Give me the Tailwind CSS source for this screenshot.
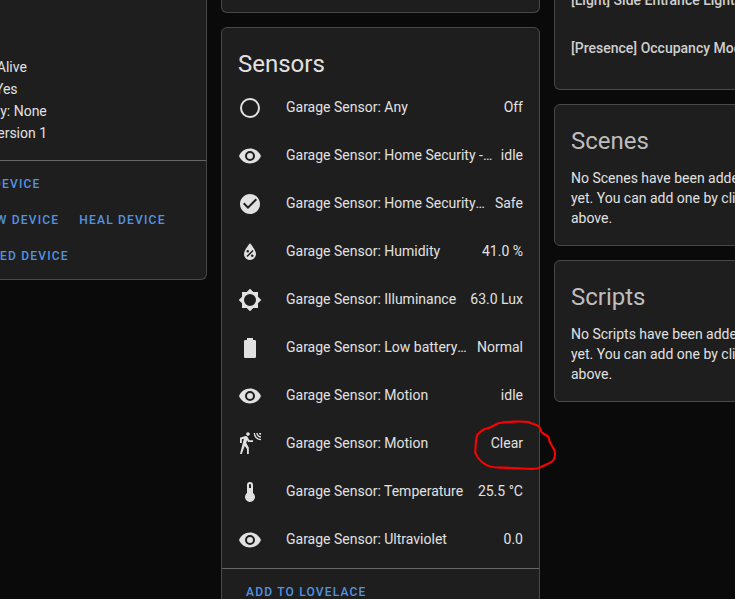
<!DOCTYPE html>
<html lang="en">
<head>
<meta charset="utf-8">
<meta name="viewport" content="width=device-width, initial-scale=1">
<title>Garage Sensor</title>
<script src="https://cdn.jsdelivr.net/npm/@tailwindcss/browser@4"></script>
</head>
<body class="bg-[#0a0a0a] font-[Roboto,sans-serif] text-sm leading-5 text-[#e1e1e1]">
<svg class="hidden" aria-hidden="true">
  <symbol id="radio" viewBox="0 0 24 24"><path d="M12,20A8,8 0 0,1 4,12A8,8 0 0,1 12,4A8,8 0 0,1 20,12A8,8 0 0,1 12,20M12,2A10,10 0 0,0 2,12A10,10 0 0,0 12,22A10,10 0 0,0 22,12A10,10 0 0,0 12,2Z"/></symbol>
  <symbol id="eye" viewBox="0 0 24 24"><path d="M12,9A3,3 0 0,0 9,12A3,3 0 0,0 12,15A3,3 0 0,0 15,12A3,3 0 0,0 12,9M12,17A5,5 0 0,1 7,12A5,5 0 0,1 12,7A5,5 0 0,1 17,12A5,5 0 0,1 12,17M12,4.5C7,4.5 2.73,7.61 1,12C2.73,16.39 7,19.5 12,19.5C17,19.5 21.27,16.39 23,12C21.27,7.61 17,4.5 12,4.5Z"/></symbol>
  <symbol id="check" viewBox="0 0 24 24"><path d="M12 2C6.5 2 2 6.5 2 12S6.5 22 12 22 22 17.5 22 12 17.5 2 12 2M10 17L5 12L6.41 10.59L10 14.17L17.59 6.58L19 8L10 17Z"/></symbol>
  <symbol id="humidity" viewBox="0 0 24 24"><path d="M12,3.25C12,3.25 6,10 6,14C6,17.32 8.69,20 12,20A6,6 0 0,0 18,14C18,10 12,3.25 12,3.25M14.47,9.97L15.53,11.03L9.53,17.03L8.47,15.97M9.75,10A1.25,1.25 0 0,1 11,11.25A1.25,1.25 0 0,1 9.75,12.5A1.25,1.25 0 0,1 8.5,11.25A1.25,1.25 0 0,1 9.75,10M14.25,14.5A1.25,1.25 0 0,1 15.5,15.75A1.25,1.25 0 0,1 14.25,17A1.25,1.25 0 0,1 13,15.75A1.25,1.25 0 0,1 14.25,14.5Z"/></symbol>
  <symbol id="brightness" viewBox="0 0 24 24"><path d="M12,18A6,6 0 0,1 6,12A6,6 0 0,1 12,6A6,6 0 0,1 18,12A6,6 0 0,1 12,18M20,15.31L23.31,12L20,8.69V4H15.31L12,0.69L8.69,4H4V8.69L0.69,12L4,15.31V20H8.69L12,23.31L15.31,20H20V15.31Z"/></symbol>
  <symbol id="battery" viewBox="0 0 24 24"><path d="M16.67,4H15V2H9V4H7.33A1.33,1.33 0 0,0 6,5.33V20.67C6,21.4 6.6,22 7.33,22H16.67A1.33,1.33 0 0,0 18,20.67V5.33C18,4.6 17.4,4 16.67,4Z"/></symbol>
  <symbol id="motion" viewBox="0 0 24 24"><path d="M10,0.2C9,0.2 8.2,1 8.2,2C8.2,3 9,3.8 10,3.8C11,3.8 11.8,3 11.8,2C11.8,1 11,0.2 10,0.2M15.67,1A7.33,7.33 0 0,0 23,8.33V7A6,6 0 0,1 17,1H15.67M18.33,1C18.33,3.58 20.42,5.67 23,5.67V4.33C21.16,4.33 19.67,2.84 19.67,1H18.33M21,1A2,2 0 0,0 23,3V1H21M7.92,4.03C7.75,4.03 7.58,4.06 7.42,4.11L2,5.8V11H3.8V7.33L5.91,6.67L2,22H3.8L6.67,13.89L9,17V22H10.8V15.59L8.31,11.05L9.04,8.18L10.12,10H15V8.2H11.38L9.38,4.87C9.08,4.37 8.54,4.03 7.92,4.03Z"/></symbol>
  <symbol id="thermometer" viewBox="0 0 24 24"><path d="M15 13V5A3 3 0 0 0 9 5V13A5 5 0 1 0 15 13M12 4A1 1 0 0 1 13 5V8H11V5A1 1 0 0 1 12 4Z"/></symbol>
</svg>
<div class="h-screen overflow-hidden">
<main class="-ml-28 flex items-start gap-[14px]">

  <!-- Device info -->
  <section class="w-[319px] shrink-0 rounded-b-md border border-t-0 border-[#484848] bg-[#1e1e1e]">
    <div class="px-4 pt-14 pb-4 leading-[22px]">
      <p>Device Status: Alive</p>
      <p>Device Ready: Yes</p>
      <p>Highest Security: None</p>
      <p>Z-Wave Plus: Version 1</p>
    </div>
    <div class="flex flex-wrap gap-x-1 border-t border-[#666] px-4 py-[5px] text-xs font-medium tracking-widest text-[#5294e2]">
      <button class="h-9 px-2">CONFIGURE DEVICE</button>
      <button class="h-9 px-2">RE-INTERVIEW DEVICE</button>
      <button class="h-9 px-2">HEAL DEVICE</button>
      <button class="h-9 px-2">REMOVE FAILED DEVICE</button>
    </div>
  </section>

  <!-- Sensors -->
  <div class="flex w-[319px] shrink-0 flex-col gap-[14px]">
    <section class="h-[13px] rounded-b-md border border-t-0 border-[#484848] bg-[#1e1e1e]"></section>
    <section class="rounded-md border border-[#484848] bg-[#1e1e1e]">
      <h1 class="px-4 pt-5 pb-[3px] text-2xl leading-8">Sensors</h1>
      <ul class="pb-[5px]">
        <li class="flex h-12 items-center px-4"><svg class="mt-[2px] mr-6 size-6 shrink-0 fill-current"><use href="#radio"/></svg><span class="flex-1 truncate">Garage Sensor: Any</span><span class="ml-2">Off</span></li>
        <li class="flex h-12 items-center px-4"><svg class="mt-[2px] mr-6 size-6 shrink-0 fill-current"><use href="#eye"/></svg><span class="flex-1 truncate">Garage Sensor: Home Security - Motion</span><span class="ml-2">idle</span></li>
        <li class="flex h-12 items-center px-4"><svg class="mt-[2px] mr-6 size-6 shrink-0 fill-current"><use href="#check"/></svg><span class="flex-1 truncate">Garage Sensor: Home Security Cover</span><span class="ml-2">Safe</span></li>
        <li class="flex h-12 items-center px-4"><svg class="mt-[2px] mr-6 size-6 shrink-0 fill-current"><use href="#humidity"/></svg><span class="flex-1 truncate">Garage Sensor: Humidity</span><span class="ml-2">41.0 %</span></li>
        <li class="flex h-12 items-center px-4"><svg class="mt-[2px] mr-6 size-6 shrink-0 fill-current"><use href="#brightness"/></svg><span class="flex-1 truncate">Garage Sensor: Illuminance</span><span class="ml-2">63.0 Lux</span></li>
        <li class="flex h-12 items-center px-4"><svg class="mt-[2px] mr-6 size-6 shrink-0 fill-current"><use href="#battery"/></svg><span class="flex-1 truncate">Garage Sensor: Low battery level</span><span class="ml-2">Normal</span></li>
        <li class="flex h-12 items-center px-4"><svg class="mt-[2px] mr-6 size-6 shrink-0 fill-current"><use href="#eye"/></svg><span class="flex-1 truncate">Garage Sensor: Motion</span><span class="ml-2">idle</span></li>
        <li class="relative flex h-12 items-center px-4"><svg class="mt-[2px] mr-6 size-6 shrink-0 fill-current"><use href="#motion"/></svg><span class="flex-1 truncate">Garage Sensor: Motion</span><span class="ml-2">Clear</span>
          <svg class="pointer-events-none absolute -top-[3px] -right-[21px] z-10 h-14 w-[90px]" viewBox="470 416 90 56" fill="none" stroke="#ff0000" stroke-width="2.1" stroke-linejoin="round"><path d="M539 426.500C537 424.500 532 424 528.500 422C522 421 506 421.500 498.500 423.300L490 427.500C487 429 485 428 482 430.500L477.500 434.500C475.500 438 475.500 448 475.300 452.500C477 457 480 461 484 463.500C489 467 493 467.600 500 467.600C510 467.600 520 468.500 532 468.900C537 469 538 468.500 539.500 467.500L546.500 464.500C550 462.500 553 462 554 459C556 453 555 450.500 553.500 448.500L550 442.500C548.500 440 550 438.500 548 436.500L542.500 433C540 431 540.500 428.500 539 426.500Z"/></svg>
        </li>
        <li class="flex h-12 items-center px-4"><svg class="mt-[2px] mr-6 size-6 shrink-0 fill-current"><use href="#thermometer"/></svg><span class="flex-1 truncate">Garage Sensor: Temperature</span><span class="ml-2">25.5 °C</span></li>
        <li class="flex h-12 items-center px-4"><svg class="mt-[2px] mr-6 size-6 shrink-0 fill-current"><use href="#eye"/></svg><span class="flex-1 truncate">Garage Sensor: Ultraviolet</span><span class="ml-2">0.0</span></li>
      </ul>
      <div class="border-t border-[#666] px-4 py-[5px] text-xs font-medium tracking-widest text-[#5294e2]">
        <button class="h-9 px-2">ADD TO LOVELACE</button>
      </div>
    </section>
  </div>

  <!-- Automations, scenes and scripts -->
  <div class="flex w-[319px] shrink-0 flex-col gap-[14px]">
    <section class="flex h-[90px] flex-col justify-end gap-7 rounded-b-md border border-t-0 border-[#484848] bg-[#1e1e1e] px-4 pb-[31px] font-medium text-[#cfcfcf]">
      <p>[Light] Side Entrance Light</p>
      <p>[Presence] Occupancy Mode</p>
    </section>
    <section class="rounded-md border border-[#484848] bg-[#1e1e1e] px-4 pt-5 pb-[17px]">
      <h1 class="text-2xl leading-8 text-[#bdbdbd]">Scenes</h1>
      <p class="pt-[11px]">No Scenes have been added using this device yet. You can add one by clicking the + button above.</p>
    </section>
    <section class="rounded-md border border-[#484848] bg-[#1e1e1e] px-4 pt-5 pb-[17px]">
      <h1 class="text-2xl leading-8 text-[#bdbdbd]">Scripts</h1>
      <p class="pt-[11px]">No Scripts have been added using this device yet. You can add one by clicking the + button above.</p>
    </section>
  </div>
</main>
</div>
</body>
</html>
